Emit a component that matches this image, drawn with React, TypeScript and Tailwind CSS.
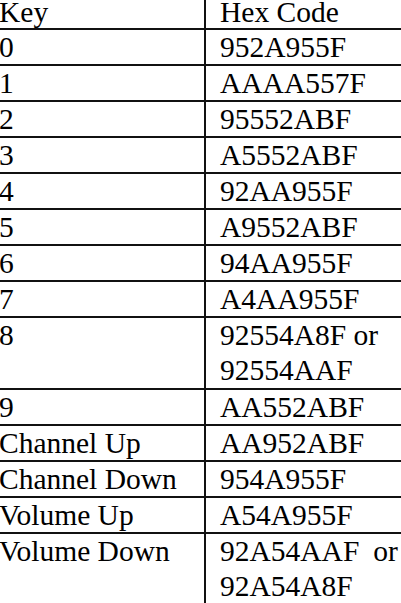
const rows: { key: string; hex: React.ReactNode; tall?: boolean }[] = [
  { key: '0', hex: '952A955F' },
  { key: '1', hex: 'AAAA557F' },
  { key: '2', hex: '95552ABF' },
  { key: '3', hex: 'A5552ABF' },
  { key: '4', hex: '92AA955F' },
  { key: '5', hex: 'A9552ABF' },
  { key: '6', hex: '94AA955F' },
  { key: '7', hex: 'A4AA955F' },
  {
    key: '8',
    hex: (
      <>
        92554A8F or
        <br />
        92554AAF
      </>
    ),
    tall: true,
  },
  { key: '9', hex: 'AA552ABF' },
  { key: 'Channel Up', hex: 'AA952ABF' },
  { key: 'Channel Down', hex: '954A955F' },
  { key: 'Volume Up', hex: 'A54A955F' },
  {
    key: 'Volume Down',
    hex: (
      <>
        92A54AAF<span className="ml-[14px]">or</span>
        <br />
        92A54A8F
      </>
    ),
    tall: true,
  },
]

export default function App() {
  return (
    <div
      className="w-[401px] h-[603px] overflow-hidden bg-white text-[29.5px] text-black"
      style={{ fontFamily: '"Liberation Serif", "Times New Roman", serif' }}
    >
      {/* header */}
      <div className="flex border-b-2 border-[#111]">
        <div className="w-[205px] shrink-0 h-[28px] leading-[24px] -ml-[1px]">Key</div>
        <div className="flex-1 h-[28px] leading-[24px] border-l-2 border-[#111] pl-[14px] whitespace-nowrap">
          Hex Code
        </div>
      </div>

      {rows.map((r) => (
        <div key={r.key} className="flex border-b-2 border-[#111]">
          <div
            className={
              r.tall
                ? 'w-[205px] shrink-0 h-[70px] leading-[35px] -ml-[1px] whitespace-nowrap'
                : 'w-[205px] shrink-0 h-[34px] leading-[34px] -ml-[1px] whitespace-nowrap'
            }
          >
            {r.key}
          </div>
          <div
            className={
              r.tall
                ? 'flex-1 h-[70px] leading-[35px] border-l-2 border-[#111] pl-[14px] whitespace-nowrap'
                : 'flex-1 h-[34px] leading-[34px] border-l-2 border-[#111] pl-[14px] whitespace-nowrap'
            }
          >
            {r.hex}
          </div>
        </div>
      ))}
    </div>
  )
}
